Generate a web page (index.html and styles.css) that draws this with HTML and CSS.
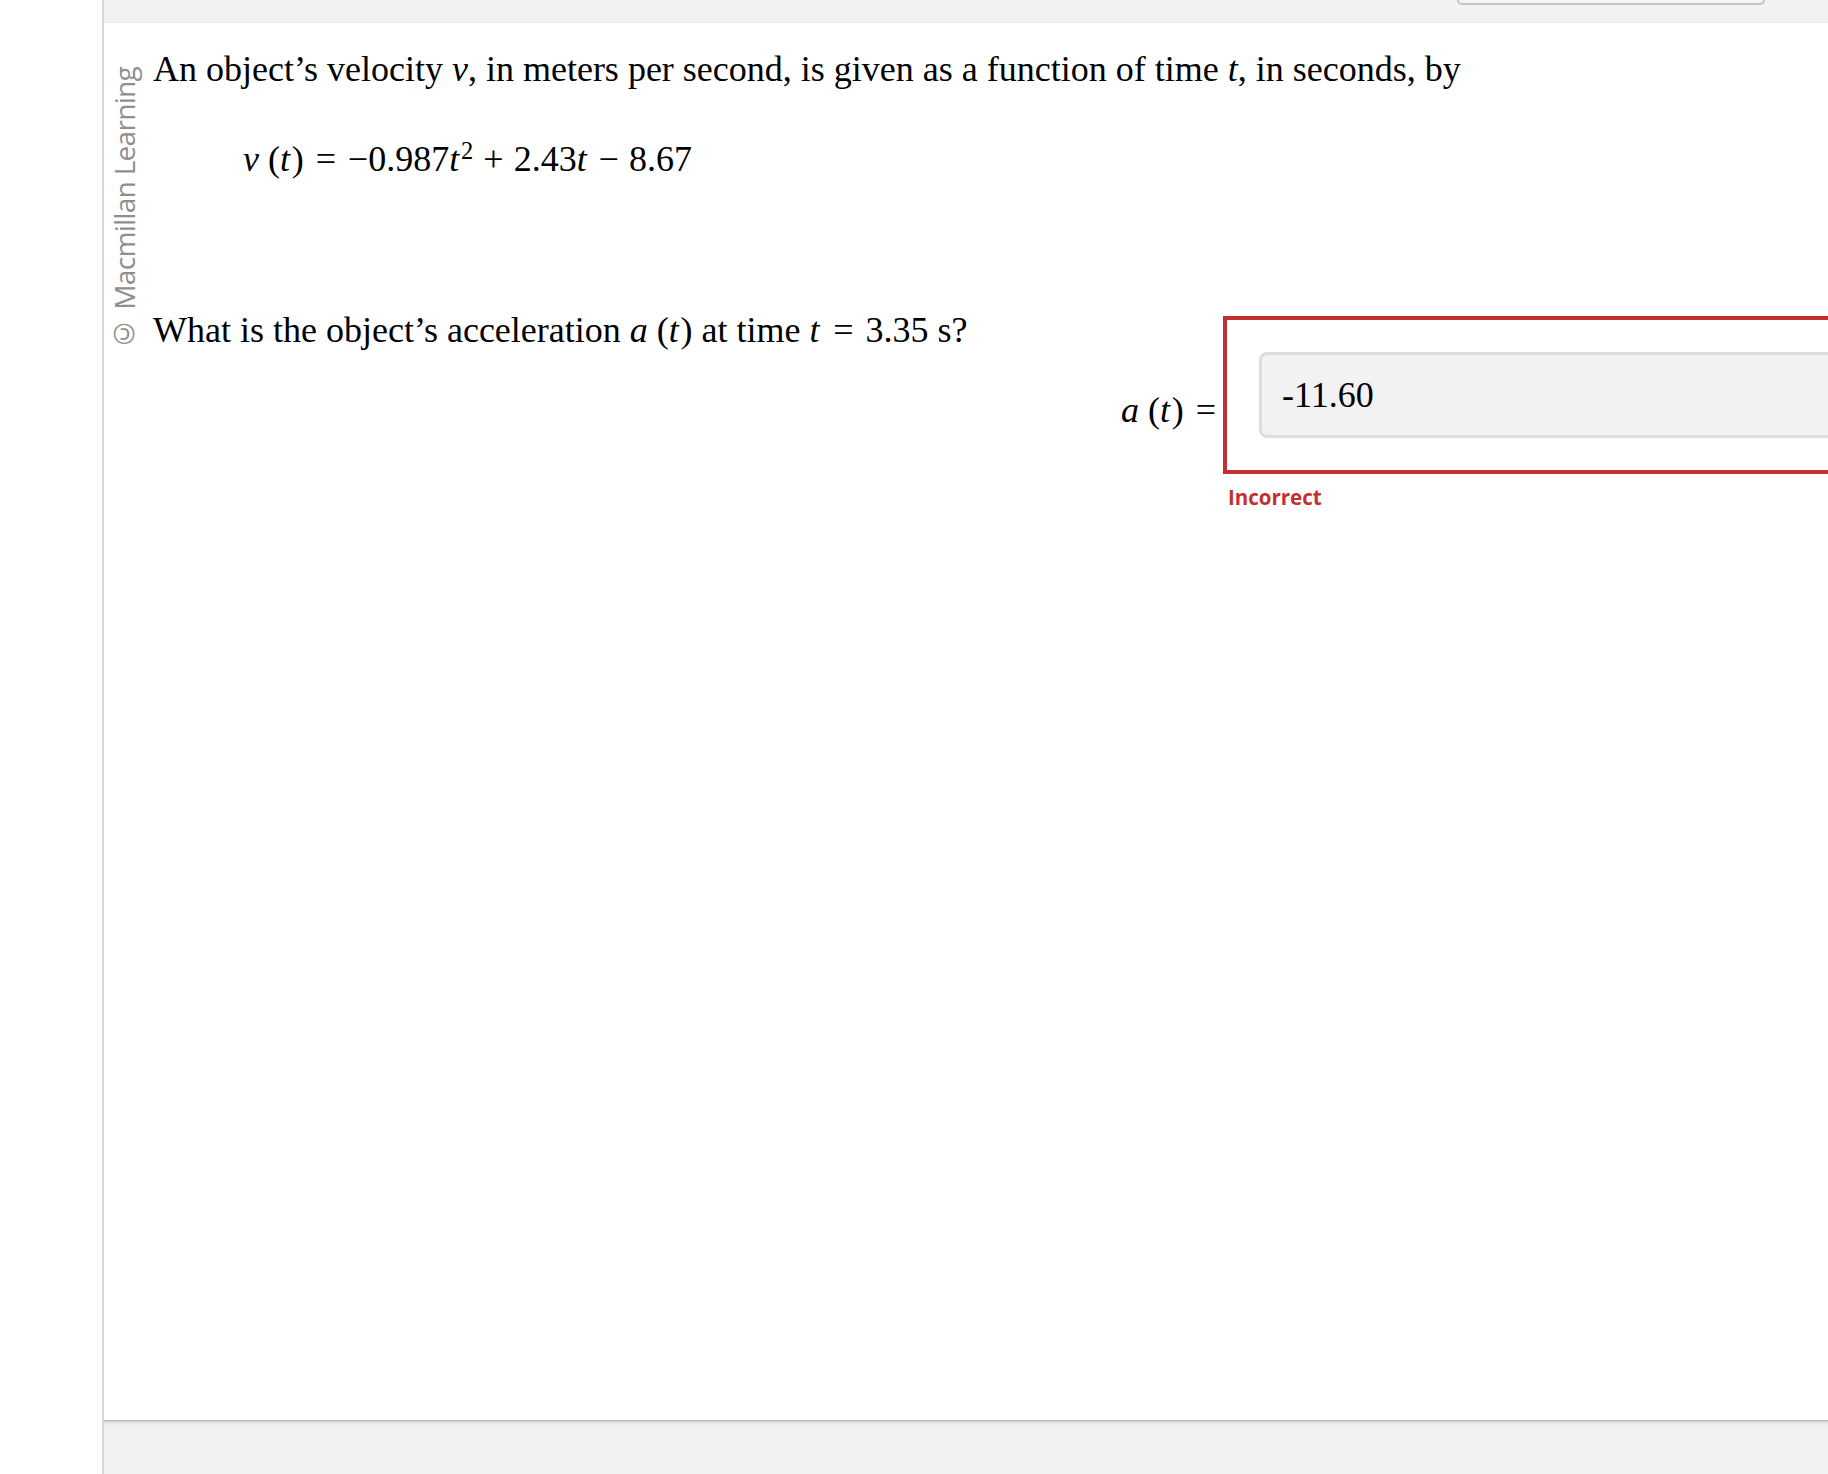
FILE: index.html
```html
<!DOCTYPE html>
<html lang="en">
<head>
<meta charset="utf-8">
<title>Question</title>
<link rel="stylesheet" href="styles.css">
</head>
<body>
<div class="page">
  <aside class="gutter"></aside>
  <main class="main">
    <div class="topbar"><div class="topbar-tab"></div></div>
    <section class="content">
      <div class="watermark">© Macmillan Learning</div>
      <div class="question">
        <p class="line1">An object’s velocity <i class="mi">v</i>, in meters per second, is given as a function of time <i class="mi">t</i>, in seconds, by</p>
        <p class="equation"><i class="mv">v</i><span class="fa"></span>(<i class="mv">t</i>)<span class="rel">=</span>−0.987<i class="mv">t</i><sup class="sup">2</sup><span class="bin">+</span>2.43<i class="mv">t</i><span class="bin">−</span>8.67</p>
        <div class="q-row">
          <p class="ask">What is the object’s acceleration <i class="mv">a</i><span class="fa"></span>(<i class="mv">t</i>) at time <i class="mv">t</i><span class="rel">=</span>3.35 s?</p>
          <div class="answer">
            <span class="label"><i class="mv">a</i><span class="fa"></span>(<i class="mv">t</i>)<span class="rel-r">=</span></span>
            <div class="answer-col">
              <div class="answer-box">
                <input class="answer-input" type="text" value="-11.60">
              </div>
              <div class="feedback">Incorrect</div>
            </div>
          </div>
        </div>
      </div>
    </section>
    <div class="footer"></div>
  </main>
</div>
</body>
</html>
```
FILE: styles.css
```css
html, body {
  margin: 0;
  padding: 0;
}
body {
  width: 1828px;
  height: 1474px;
  overflow: hidden;
  background: #ffffff;
  font-family: "Liberation Serif", "Times New Roman", serif;
  color: #000;
}
.page {
  display: flex;
  height: 1474px;
}
.gutter {
  flex: none;
  width: 102px;
  border-right: 2px solid #d9d9d9;
  background: #fff;
}
.main {
  flex: 1;
  min-width: 0;
  display: flex;
  flex-direction: column;
}
.topbar {
  flex: none;
  height: 22px;
  background: #f2f2f2;
  border-bottom: 1px solid #e6e6e6;
  display: flex;
  justify-content: flex-end;
  padding-right: 63px;
}
.topbar-tab {
  width: 304px;
  height: 3px;
  border: 2px solid #c4c4c4;
  border-top: none;
  border-radius: 0 0 5px 5px;
  background: #f4f4f4;
}
.content {
  flex: 1;
  display: flex;
  align-items: flex-start;
  padding-left: 6px;
  overflow: hidden;
  background: #fff;
}
.watermark {
  flex: none;
  writing-mode: vertical-rl;
  transform: rotate(180deg);
  font-family: "Open Sans", sans-serif;
  font-size: 28px;
  letter-spacing: -0.7px;
  line-height: 30px;
  width: 30px;
  color: #8f8f8f;
  margin-top: 44px;
  margin-left: -1px;
  white-space: nowrap;
}
.question {
  flex: none;
  margin-left: 14px;
  padding-top: 25px;
  font-size: 36px;
  line-height: 1.2;
}
.question p {
  margin: 0;
  white-space: nowrap;
}
.mi {
  font-style: italic;
}
.mv {
  font-style: italic;
  padding-right: 0.05em;
}
.fa {
  display: inline-block;
  width: 0.2em;
}
.rel {
  padding: 0 0.33em;
}
.rel-r {
  padding-left: 0.33em;
}
.bin {
  padding: 0 0.28em;
}
.sup {
  font-size: 0.68em;
  vertical-align: 0.48em;
  line-height: 0;
}
.equation {
  margin-top: 47px !important;
  margin-left: 90px !important;
}
.q-row {
  display: flex;
  align-items: flex-start;
  margin-top: 128px;
}
.ask {
  flex: none;
  width: 968px;
}
.answer {
  flex: none;
  display: flex;
  align-items: flex-start;
  margin-top: 6.5px;
}
.label {
  margin-top: 73px;
  margin-right: 7px;
  white-space: nowrap;
}
.answer-col {
  display: flex;
  flex-direction: column;
}
.answer-box {
  width: 760px;
  border: 4px solid #c2302f;
  padding: 32px;
}
.answer-input {
  display: block;
  box-sizing: border-box;
  width: 100%;
  height: 86px;
  margin: 0;
  border: 3px solid #dddddd;
  border-radius: 8px;
  background: #f2f2f2;
  padding: 0 20px;
  font-family: "Liberation Serif", "Times New Roman", serif;
  font-size: 36px;
  color: #000;
  outline: none;
}
.feedback {
  margin-top: 11px;
  padding-left: 5px;
  font-family: "Open Sans", sans-serif;
  font-weight: 700;
  font-size: 20.5px;
  line-height: 24px;
  color: #c2302f;
}
.footer {
  flex: none;
  height: 54px;
  background: linear-gradient(to bottom, rgba(0, 0, 0, 0.26) 0, rgba(0, 0, 0, 0.1) 2px, rgba(0, 0, 0, 0.03) 4px, rgba(0, 0, 0, 0) 6px), #f2f2f2;
}
```
